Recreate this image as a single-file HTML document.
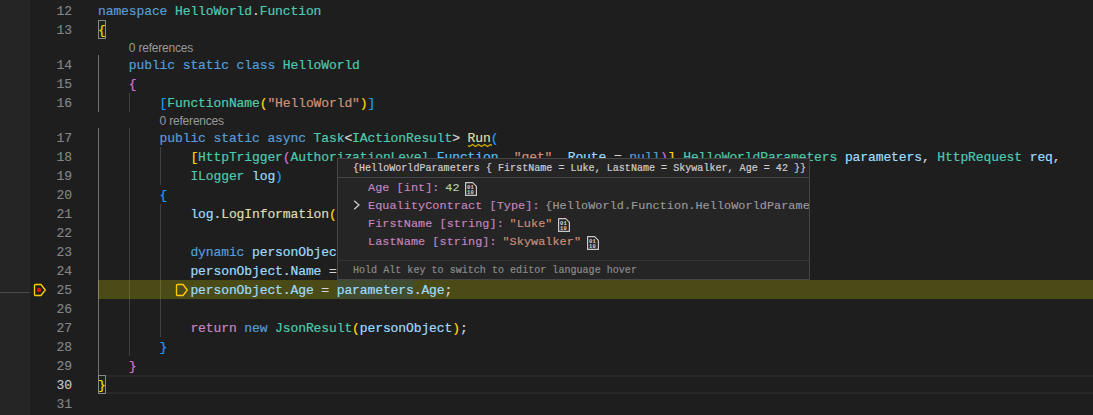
<!DOCTYPE html><html><head><meta charset="utf-8"><title>editor</title><style>
*{margin:0;padding:0;box-sizing:border-box}
html,body{width:1093px;height:415px;overflow:hidden;background:#1e1e1e}
body{position:relative;font-family:"Liberation Mono",monospace;font-size:13px;color:#d4d4d4}
.side{position:absolute;left:0;top:0;width:30px;height:415px;background:#252526}
.side i{position:absolute;left:0;top:292px;width:30px;height:1px;background:#4a4a4a}
.ln{position:absolute;left:30px;width:42px;text-align:right;color:#858585;height:19px;line-height:19px;padding-top:1px;letter-spacing:-0.1px;white-space:pre;-webkit-text-stroke:0.15px}
.ln.cur{color:#c6c6c6}
.t{position:absolute;height:19px;line-height:19px;margin-top:1px;white-space:pre;letter-spacing:-0.1px;-webkit-text-stroke:0.2px}
.lens{position:absolute;height:16px;line-height:16px;font-family:"Liberation Sans",sans-serif;font-size:12px;color:#999;white-space:pre;letter-spacing:-0.2px;margin-top:1px}
.g{position:absolute;width:1px;background:#404040}
.g.a{background:#707070}
.hl{position:absolute;left:98px;right:0;top:280px;height:19px;background:rgba(255,255,0,0.2)}
.hh{position:absolute;left:337px;top:280px;width:77px;height:19px;background:rgba(38,79,120,0.25)}
.cl{position:absolute;left:98px;right:0;top:375px;height:19px;border-top:2px solid #282828;border-bottom:2px solid #282828}
.bm{position:absolute;width:8px;height:19px;border:1px solid #888;background:#1b261b}
.sq{}
.hov{position:absolute;left:337px;top:158px;width:473px;height:122px;background:#252526;border:1px solid #454545;overflow:hidden}
.hov .title{position:absolute;left:0;top:0;width:471px;height:18px;line-height:18px;padding-top:1px;font-size:10px;color:#cccccc;white-space:pre;padding-left:15px;letter-spacing:0.04px;-webkit-text-stroke:0.2px}
.hov .sep1{position:absolute;left:0;top:18px;width:471px;height:1px;background:#454545}
.hov .row{position:absolute;left:30px;height:18px;line-height:18px;margin-top:0px;font-size:11.8px;white-space:pre;letter-spacing:0.069px;color:#c586c0;-webkit-text-stroke:0.15px}
.hov .st{position:absolute;left:0;top:101px;width:471px;height:19px;border-top:1px solid #363636;background:#252526;font-size:10px;line-height:20px;color:#8a8a8a;padding-left:15px;white-space:pre;letter-spacing:0.04px;-webkit-text-stroke:0.2px}
.num{color:#b5cea8}.str{color:#ce9178}.dim{color:#9a9a9a}.num,.str,.dim{margin-left:-1.4px}
svg{position:absolute;overflow:visible}
</style></head><body>
<div class="side"><i></i></div>
<div class="g a" style="left:98px;top:55px;height:57px"></div>
<div class="g a" style="left:98px;top:128px;height:247px"></div>
<div class="g " style="left:129px;top:93px;height:19px"></div>
<div class="g " style="left:129px;top:128px;height:228px"></div>
<div class="g " style="left:160px;top:147px;height:38px"></div>
<div class="g " style="left:160px;top:204px;height:133px"></div>
<div class="hl"></div><div class="hh"></div><div class="cl"></div>
<div class="bm" style="left:98px;top:20px"></div>
<div class="bm" style="left:98px;top:375px"></div>
<div class="lens" style="left:128.8px;top:39px">0 references</div>
<div class="lens" style="left:159.6px;top:112px">0 references</div>
<div class="ln" style="top:1px">12</div>
<span class="t" style="left:98.00px;top:1px;color:#569cd6">namespace</span>
<span class="t" style="left:175.00px;top:1px;color:#4ec9b0">HelloWorld</span>
<span class="t" style="left:252.00px;top:1px;color:#d4d4d4">.</span>
<span class="t" style="left:259.70px;top:1px;color:#4ec9b0">Function</span>
<div class="ln" style="top:20px">13</div>
<span class="t" style="left:98.00px;top:20px;color:#ffd700">{</span>
<div class="ln" style="top:55px">14</div>
<span class="t" style="left:128.80px;top:55px;color:#569cd6">public</span>
<span class="t" style="left:182.70px;top:55px;color:#569cd6">static</span>
<span class="t" style="left:236.60px;top:55px;color:#569cd6">class</span>
<span class="t" style="left:282.80px;top:55px;color:#4ec9b0">HelloWorld</span>
<div class="ln" style="top:74px">15</div>
<span class="t" style="left:128.80px;top:74px;color:#da70d6">{</span>
<div class="ln" style="top:93px">16</div>
<span class="t" style="left:159.60px;top:93px;color:#179fff">[</span>
<span class="t" style="left:167.30px;top:93px;color:#4ec9b0">FunctionName</span>
<span class="t" style="left:259.70px;top:93px;color:#ffd700">(</span>
<span class="t" style="left:267.40px;top:93px;color:#ce9178">"HelloWorld"</span>
<span class="t" style="left:359.80px;top:93px;color:#ffd700">)</span>
<span class="t" style="left:367.50px;top:93px;color:#179fff">]</span>
<div class="ln" style="top:128px">17</div>
<span class="t" style="left:159.60px;top:128px;color:#569cd6">public</span>
<span class="t" style="left:213.50px;top:128px;color:#569cd6">static</span>
<span class="t" style="left:267.40px;top:128px;color:#569cd6">async</span>
<span class="t" style="left:313.60px;top:128px;color:#4ec9b0">Task</span>
<span class="t" style="left:344.40px;top:128px;color:#d4d4d4">&lt;</span>
<span class="t" style="left:352.10px;top:128px;color:#4ec9b0">IActionResult</span>
<span class="t" style="left:452.20px;top:128px;color:#d4d4d4">&gt;</span>
<span class="t sq" style="left:467.60px;top:128px;color:#dcdcaa">Run</span>
<span class="t" style="left:490.70px;top:128px;color:#179fff">(</span>
<div class="ln" style="top:147px">18</div>
<span class="t" style="left:190.40px;top:147px;color:#ffd700">[</span>
<span class="t" style="left:198.10px;top:147px;color:#4ec9b0">HttpTrigger</span>
<span class="t" style="left:282.80px;top:147px;color:#da70d6">(</span>
<span class="t" style="left:290.50px;top:147px;color:#4ec9b0">AuthorizationLevel</span>
<span class="t" style="left:429.10px;top:147px;color:#d4d4d4">.</span>
<span class="t" style="left:436.80px;top:147px;color:#4fc1ff">Function</span>
<span class="t" style="left:498.40px;top:147px;color:#d4d4d4">,</span>
<span class="t" style="left:513.80px;top:147px;color:#ce9178">"get"</span>
<span class="t" style="left:552.30px;top:147px;color:#d4d4d4">,</span>
<span class="t" style="left:567.70px;top:147px;color:#9cdcfe">Route</span>
<span class="t" style="left:613.90px;top:147px;color:#d4d4d4">=</span>
<span class="t" style="left:629.30px;top:147px;color:#569cd6">null</span>
<span class="t" style="left:660.10px;top:147px;color:#da70d6">)</span>
<span class="t" style="left:667.80px;top:147px;color:#ffd700">]</span>
<span class="t" style="left:683.20px;top:147px;color:#4ec9b0">HelloWorldParameters</span>
<span class="t" style="left:844.90px;top:147px;color:#9cdcfe">parameters</span>
<span class="t" style="left:921.90px;top:147px;color:#d4d4d4">,</span>
<span class="t" style="left:937.30px;top:147px;color:#4ec9b0">HttpRequest</span>
<span class="t" style="left:1029.70px;top:147px;color:#9cdcfe">req</span>
<span class="t" style="left:1052.80px;top:147px;color:#d4d4d4">,</span>
<div class="ln" style="top:166px">19</div>
<span class="t" style="left:190.40px;top:166px;color:#4ec9b0">ILogger</span>
<span class="t" style="left:252.00px;top:166px;color:#9cdcfe">log</span>
<span class="t" style="left:275.10px;top:166px;color:#179fff">)</span>
<div class="ln" style="top:185px">20</div>
<span class="t" style="left:159.60px;top:185px;color:#179fff">{</span>
<div class="ln" style="top:204px">21</div>
<span class="t" style="left:190.40px;top:204px;color:#9cdcfe">log</span>
<span class="t" style="left:213.50px;top:204px;color:#d4d4d4">.</span>
<span class="t" style="left:221.20px;top:204px;color:#dcdcaa">LogInformation</span>
<span class="t" style="left:329.00px;top:204px;color:#ffd700">(</span>
<span class="t" style="left:336.70px;top:204px;color:#ce9178">"C# HTTP trigger function processed a request."</span>
<div class="ln" style="top:223px">22</div>
<div class="ln" style="top:242px">23</div>
<span class="t" style="left:190.40px;top:242px;color:#569cd6">dynamic</span>
<span class="t" style="left:252.00px;top:242px;color:#9cdcfe">personObject</span>
<span class="t" style="left:352.10px;top:242px;color:#d4d4d4">=</span>
<span class="t" style="left:367.50px;top:242px;color:#569cd6">new</span>
<span class="t" style="left:398.30px;top:242px;color:#4ec9b0">ExpandoObject</span>
<span class="t" style="left:498.40px;top:242px;color:#ffd700">(</span>
<span class="t" style="left:506.10px;top:242px;color:#ffd700">)</span>
<span class="t" style="left:513.80px;top:242px;color:#d4d4d4">;</span>
<div class="ln" style="top:261px">24</div>
<span class="t" style="left:190.40px;top:261px;color:#9cdcfe">personObject</span>
<span class="t" style="left:282.80px;top:261px;color:#d4d4d4">.</span>
<span class="t" style="left:290.50px;top:261px;color:#9cdcfe">Name</span>
<span class="t" style="left:329.00px;top:261px;color:#d4d4d4">=</span>
<span class="t" style="left:344.40px;top:261px;color:#9cdcfe">parameters</span>
<span class="t" style="left:421.40px;top:261px;color:#d4d4d4">.</span>
<span class="t" style="left:429.10px;top:261px;color:#9cdcfe">FirstName</span>
<span class="t" style="left:498.40px;top:261px;color:#d4d4d4">;</span>
<div class="ln" style="top:280px">25</div>
<span class="t" style="left:190.40px;top:280px;color:#9cdcfe">personObject</span>
<span class="t" style="left:282.80px;top:280px;color:#d4d4d4">.</span>
<span class="t" style="left:290.50px;top:280px;color:#9cdcfe">Age</span>
<span class="t" style="left:321.30px;top:280px;color:#d4d4d4">=</span>
<span class="t" style="left:336.70px;top:280px;color:#9cdcfe">parameters</span>
<span class="t" style="left:413.70px;top:280px;color:#d4d4d4">.</span>
<span class="t" style="left:421.40px;top:280px;color:#9cdcfe">Age</span>
<span class="t" style="left:444.50px;top:280px;color:#d4d4d4">;</span>
<div class="ln" style="top:299px">26</div>
<div class="ln" style="top:318px">27</div>
<span class="t" style="left:190.40px;top:318px;color:#c586c0">return</span>
<span class="t" style="left:244.30px;top:318px;color:#569cd6">new</span>
<span class="t" style="left:275.10px;top:318px;color:#4ec9b0">JsonResult</span>
<span class="t" style="left:352.10px;top:318px;color:#ffd700">(</span>
<span class="t" style="left:359.80px;top:318px;color:#9cdcfe">personObject</span>
<span class="t" style="left:452.20px;top:318px;color:#ffd700">)</span>
<span class="t" style="left:459.90px;top:318px;color:#d4d4d4">;</span>
<div class="ln" style="top:337px">28</div>
<span class="t" style="left:159.60px;top:337px;color:#179fff">}</span>
<div class="ln" style="top:356px">29</div>
<span class="t" style="left:128.80px;top:356px;color:#da70d6">}</span>
<div class="ln cur" style="top:375px">30</div>
<span class="t" style="left:98.00px;top:375px;color:#ffd700">}</span>
<div class="ln" style="top:394px">31</div>
<svg width="24" height="4" style="left:467.8px;top:144px" viewBox="0 0 24 4"><path d="M0 1.4 L1.5 2.5 L4.5 0.5 L6 1.4 L7.5 2.5 L10.5 0.5 L12 1.4 L13.5 2.5 L16.5 0.5 L18 1.4 L19.5 2.5 L22.5 0.5 L24 1.4" fill="none" stroke="#d4ad00" stroke-width="1.25" stroke-linejoin="round"/></svg>
<svg width="14" height="14" style="left:33.2px;top:283px" viewBox="0 0 14 14"><path d="M2.5 1.5 H8 L12.3 7 L8 12.5 H2.5 Q1.5 12.5 1.5 11.5 V2.5 Q1.5 1.5 2.5 1.5 Z" fill="none" stroke="#ffcc00" stroke-width="1.35" stroke-linejoin="round"/><circle cx="6" cy="7" r="2.2" fill="#e51400"/></svg>
<svg width="14" height="14" style="left:174.9px;top:283.2px" viewBox="0 0 14 14"><path d="M2.5 1.5 H8 L12.3 7 L8 12.5 H2.5 Q1.5 12.5 1.5 11.5 V2.5 Q1.5 1.5 2.5 1.5 Z" fill="none" stroke="#ffcc00" stroke-width="1.35" stroke-linejoin="round"/></svg>
<div class="hov"><div class="title">{HelloWorldParameters { FirstName = Luke, LastName = Skywalker, Age = 42 }}</div><div class="sep1"></div><div class="row" style="top:20px">Age [int]: <span class="num">42</span></div><svg width="12" height="14" style="left:127.05px;top:23px" viewBox="0 0 12 14"><path d="M0.6 0.6 H7.7 L11.4 4.3 V13.4 H0.6 Z" fill="none" stroke="#c8c8c8" stroke-width="1.2" stroke-linejoin="round"/><text x="2.1" y="7" font-family="Liberation Mono,monospace" font-size="5.4" font-weight="bold" fill="#d8d8d8" textLength="6.6" lengthAdjust="spacingAndGlyphs">01</text><text x="2.1" y="12" font-family="Liberation Mono,monospace" font-size="5.4" font-weight="bold" fill="#d8d8d8" textLength="6.6" lengthAdjust="spacingAndGlyphs">10</text></svg><div class="row" style="top:38px">EqualityContract [Type]: <span class="dim">{HelloWorld.Function.HelloWorldParameters}</span></div><div class="row" style="top:56px">FirstName [string]: <span class="str">"Luke"</span></div><svg width="12" height="14" style="left:220.00px;top:59px" viewBox="0 0 12 14"><path d="M0.6 0.6 H7.7 L11.4 4.3 V13.4 H0.6 Z" fill="none" stroke="#c8c8c8" stroke-width="1.2" stroke-linejoin="round"/><text x="2.1" y="7" font-family="Liberation Mono,monospace" font-size="5.4" font-weight="bold" fill="#d8d8d8" textLength="6.6" lengthAdjust="spacingAndGlyphs">01</text><text x="2.1" y="12" font-family="Liberation Mono,monospace" font-size="5.4" font-weight="bold" fill="#d8d8d8" textLength="6.6" lengthAdjust="spacingAndGlyphs">10</text></svg><div class="row" style="top:74px">LastName [string]: <span class="str">"Skywalker"</span></div><svg width="12" height="14" style="left:248.60px;top:77px" viewBox="0 0 12 14"><path d="M0.6 0.6 H7.7 L11.4 4.3 V13.4 H0.6 Z" fill="none" stroke="#c8c8c8" stroke-width="1.2" stroke-linejoin="round"/><text x="2.1" y="7" font-family="Liberation Mono,monospace" font-size="5.4" font-weight="bold" fill="#d8d8d8" textLength="6.6" lengthAdjust="spacingAndGlyphs">01</text><text x="2.1" y="12" font-family="Liberation Mono,monospace" font-size="5.4" font-weight="bold" fill="#d8d8d8" textLength="6.6" lengthAdjust="spacingAndGlyphs">10</text></svg><svg width="8" height="10" style="left:15.4px;top:41.4px" viewBox="0 0 8 10"><path d="M1.2 0.7 L6 5 L1.2 9.3" fill="none" stroke="#cfcfcf" stroke-width="1.25"/></svg><div class="st">Hold Alt key to switch to editor language hover</div></div>
</body></html>
